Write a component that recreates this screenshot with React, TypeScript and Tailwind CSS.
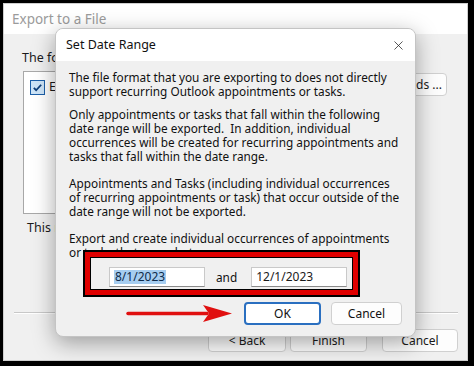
import { X } from "lucide-react";

function WinButton({ label, className = "" }: { label: string; className?: string }) {
  return (
    <div
      className={`flex h-[23px] shrink-0 items-center justify-center whitespace-nowrap rounded-[4px] border border-[#d0d0d0] bg-[#fdfdfd] text-[12px] text-[#1a1a1a] ${className}`}
    >
      {label}
    </div>
  );
}

function ExportWindow() {
  return (
    <div className="flex h-full flex-col border border-[#cfcfcf] bg-[#f0f0f0]">
      <div className="flex h-[30px] shrink-0 items-center bg-white pl-[8px] text-[13.5px] text-[#9b9b9b]">
        Export to a File
      </div>

      <div className="mt-[15px] whitespace-nowrap pl-[18px] text-[12.5px] leading-[18px] text-[#1a1a1a]">
        The following actions will be performed:
      </div>

      <div className="mt-[4px] flex items-start pl-[19px] pr-[20px]">
        <div className="h-[143px] flex-1 border border-[#a8a8a8] bg-white px-[6px] pt-[6px]">
          <div className="flex items-center gap-[4px] whitespace-nowrap text-[12.5px] text-[#1a1a1a]">
            <div className="flex h-[15px] w-[15px] items-center justify-center border border-[#1c5fa8] bg-[#cde4f7]">
              <svg viewBox="0 0 12 12" className="h-[11px] w-[11px]">
                <path d="M2 6.5l2.5 2.5L10 3" fill="none" stroke="#0b3d7a" strokeWidth="2" />
              </svg>
            </div>
            <span>Export "Calendar" from folder: Calendar</span>
          </div>
        </div>
        <WinButton label="Map Custom Fields ..." className="ml-[8px] mt-[2px] w-[130px]" />
      </div>

      <div className="mt-[5px] whitespace-nowrap pl-[23px] text-[12.5px] leading-[18px] text-[#1a1a1a]">
        This may take a few minutes and cannot be canceled.
      </div>

      <div className="mt-auto">
        <div className="ml-[10px] mr-[9px] border-t border-b border-t-[#c8c8c8] border-b-white" />
        <div className="mb-[8px] mt-[15px] flex pr-[8px] pl-[204px]">
          <WinButton label="< Back" className="w-[78px]" />
          <WinButton label="Finish" className="ml-[4px] w-[77px]" />
          <WinButton label="Cancel" className="ml-[15px] w-[76px]" />
        </div>
      </div>
    </div>
  );
}

function DateInput({ value, selected }: { value: string; selected?: boolean }) {
  return (
    <div className="flex h-[20px] w-[96px] items-center border border-[#c9c9c9] border-b-[#8a8a8a] bg-white pl-[4px] text-[12px] text-[#1a1a1a]">
      <span className={selected ? "bg-[#a6cdf0] px-[1px] text-[#0d2a4a]" : ""}>{value}</span>
    </div>
  );
}

function SetDateRange() {
  return (
    <div className="absolute left-[55px] top-[28px] flex h-[309px] w-[361px] flex-col overflow-hidden rounded-[8px] border border-[#c4c4c4] bg-[#f0f0f0] shadow-[0_6px_22px_rgba(0,0,0,0.35)]">
      <div className="flex h-[32px] shrink-0 items-center justify-between bg-white pl-[10px] pr-[9px] text-[12.5px] text-[#111]">
        <span>Set Date Range</span>
        <X size={15} strokeWidth={1.2} className="text-[#222]" />
      </div>
      <div className="flex flex-1 flex-col whitespace-nowrap px-[13px] pt-[9px] text-[11.8px] leading-[14px] text-[#111]">
        <p>
          The file format that you are exporting to does not directly
          <br />
          support recurring Outlook appointments or tasks.
        </p>
        <p className="mt-[9px]">
          Only appointments or tasks that fall within the following
          <br />
          date range will be exported.&nbsp; In addition, individual
          <br />
          occurrences will be created for recurring appointments and
          <br />
          tasks that fall within the date range.
        </p>
        <p className="mt-[13px]">
          Appointments and Tasks (including individual occurrences
          <br />
          of recurring appointments or task) that occur outside of the
          <br />
          date range will not be exported.
        </p>
        <p className="mt-[13px]">
          Export and create individual occurrences of appointments
          <br />
          or tasks that occur between:
        </p>
        <div className="mt-[8px] flex items-center pl-[40px]">
          <DateInput value="8/1/2023" selected />
          <span className="ml-[11px] mr-[14px]">and</span>
          <DateInput value="12/1/2023" />
        </div>
        <div className="mt-[15px] flex justify-end gap-[10px]">
          <div className="flex h-[23px] w-[77px] items-center justify-center rounded-[4px] border-2 border-[#2a6fc0] bg-white text-[12px]">
            OK
          </div>
          <div className="flex h-[23px] w-[71px] items-center justify-center rounded-[4px] border border-[#d0d0d0] bg-[#fdfdfd] text-[12px]">
            Cancel
          </div>
        </div>
      </div>
    </div>
  );
}

export default function App() {
  return (
    <div
      className="relative h-[366px] w-[474px] overflow-hidden bg-black pb-[5px] pl-[3px] pr-[6px] pt-[3px]"
      style={{ fontFamily: '"Noto Sans", "Open Sans", sans-serif' }}
    >
      <ExportWindow />
      <SetDateRange />

      {/* annotation: red highlight box */}
      <div className="absolute left-[83px] top-[250px] h-[47px] w-[277px] border-2 border-black">
        <div className="h-full w-full border-[5px] border-[#e00000]">
          <div className="h-full w-full border border-black" />
        </div>
      </div>

      {/* annotation: red arrow */}
      <svg className="absolute left-[125px] top-[303px]" width="110" height="20" viewBox="0 0 110 20">
        <path d="M3 10.5 H82" stroke="#e01010" strokeWidth="3.5" strokeLinecap="round" />
        <path d="M78 2 L107 10.5 L78 19 L84 10.5 Z" fill="#e01010" />
      </svg>
    </div>
  );
}
